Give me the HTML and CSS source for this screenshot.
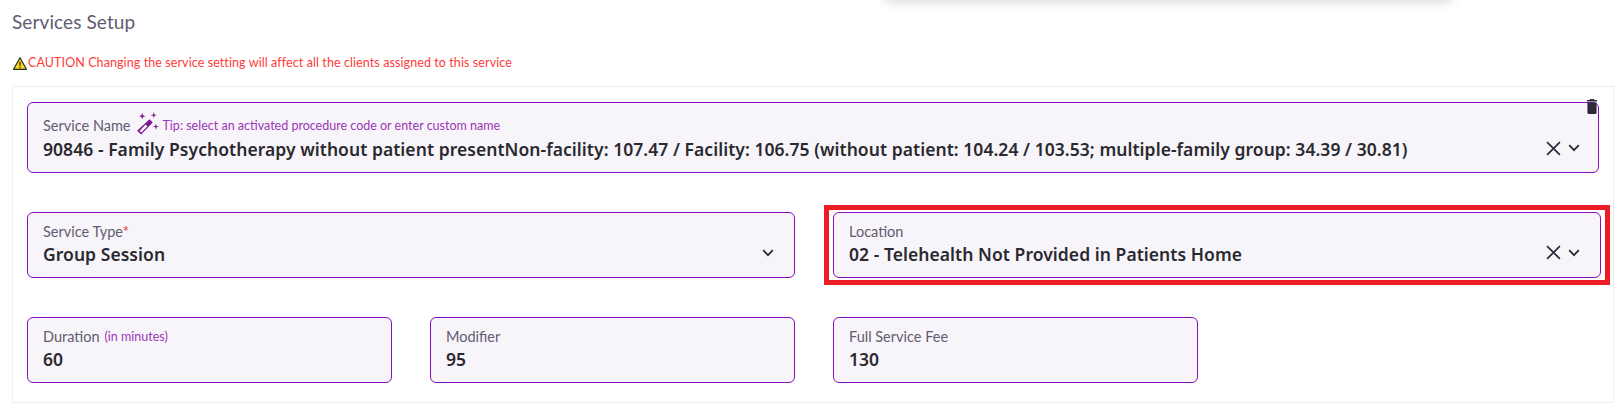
FILE: index.html
```html
<!DOCTYPE html>
<html lang="en">
<head>
    <meta charset="UTF-8">
    <meta name="viewport" content="width=device-width, initial-scale=1.0">
    <title>Services Setup</title>
    <link rel="stylesheet" href="styles.css">
</head>
<body>
    <!-- Menu sticking out of the top of the window -->
    <div class="top-popup"></div>

    <h1 class="page-title">Services Setup</h1>

    <p class="caution">
        <svg class="caution-icon" viewBox="0 0 24 22">
            <path d="M12 1 L23 21 H1 Z" fill="#f4d81c" stroke="#2d2a12" stroke-width="2" stroke-linejoin="round"/>
            <rect x="11" y="8" width="2.2" height="7" fill="#2d2a12"/>
            <rect x="11" y="16.5" width="2.2" height="2.2" fill="#2d2a12"/>
        </svg>
        <span>CAUTION Changing the service setting will affect all the clients assigned to this service</span>
    </p>

    <div class="panel">
        <svg class="delete-icon" viewBox="0 0 10 15">
            <path d="M3.2 0 H6.8 L7.4 1 H10 V2.6 H0 V1 H2.6 Z" fill="#2f2a3b"/>
            <path d="M0.4 3.4 H9.6 V13.4 Q9.6 15 8 15 H2 Q0.4 15 0.4 13.4 Z" fill="#2f2a3b"/>
        </svg>

        <!-- Service name -->
        <div class="field field-name">
            <div class="field-body">
                <div class="field-label">
                    <span>Service Name</span>
                    <svg class="wand-icon" viewBox="0 0 22 22">
                        <path d="M1 18 L13 7 L16 10 L5 21.5 Z M3.4 18.2 L5.2 19.6 L11 13.6 L9.2 12 Z" fill="#7b1a8c" fill-rule="evenodd"/>
                        <path d="M6 1 L6.8 3.2 L9 4 L6.8 4.8 L6 7 L5.2 4.8 L3 4 L5.2 3.2 Z" fill="#7b1a8c"/>
                        <path d="M17 0 L17.7 2.3 L20 3 L17.7 3.7 L17 6 L16.3 3.7 L14 3 L16.3 2.3 Z" fill="#7b1a8c"/>
                        <path d="M19 11 L19.7 13.3 L22 14 L19.7 14.7 L19 17 L18.3 14.7 L16 14 L18.3 13.3 Z" fill="#7b1a8c"/>
                    </svg>
                    <span class="tip">Tip: select an activated procedure code or enter custom name</span>
                </div>
                <div class="field-value">90846 - Family Psychotherapy without patient presentNon-facility: 107.47 / Facility: 106.75 (without patient: 104.24 / 103.53; multiple-family group: 34.39 / 30.81)</div>
            </div>
            <svg class="clear-icon" viewBox="0 0 14 14"><path d="M1 1 L13 13 M13 1 L1 13"/></svg>
            <svg class="chevron-icon" viewBox="0 0 10 7"><path d="M0.8 1 L5 5.4 L9.2 1"/></svg>
        </div>

        <div class="grid">
            <div class="field span-2">
                <div class="field-body">
                    <div class="field-label"><span>Service Type<span class="required">*</span></span></div>
                    <div class="field-value">Group Session</div>
                </div>
                <svg class="chevron-icon" viewBox="0 0 10 7"><path d="M0.8 1 L5 5.4 L9.2 1"/></svg>
            </div>

            <div class="field span-2 highlighted">
                <div class="field-body">
                    <div class="field-label"><span>Location</span></div>
                    <div class="field-value">02 - Telehealth Not Provided in Patients Home</div>
                </div>
                <svg class="clear-icon" viewBox="0 0 14 14"><path d="M1 1 L13 13 M13 1 L1 13"/></svg>
                <svg class="chevron-icon" viewBox="0 0 10 7"><path d="M0.8 1 L5 5.4 L9.2 1"/></svg>
            </div>

            <div class="field">
                <div class="field-body">
                    <div class="field-label"><span>Duration</span> <span class="tip">(in minutes)</span></div>
                    <div class="field-value">60</div>
                </div>
            </div>
            <div class="field">
                <div class="field-body">
                    <div class="field-label"><span>Modifier</span></div>
                    <div class="field-value">95</div>
                </div>
            </div>
            <div class="field">
                <div class="field-body">
                    <div class="field-label"><span>Full Service Fee</span></div>
                    <div class="field-value">130</div>
                </div>
            </div>
        </div>
    </div>
</body>
</html>
```

FILE: styles.css
```css
/* Basic reset */
* {
    margin: 0;
    padding: 0;
    box-sizing: border-box;
}

html, body {
    height: 100%;
    overflow: hidden;
}

body {
    position: relative;
    background-color: white;
    font-family: "Noto Sans", Arial, sans-serif;
    padding: 0 7px 0 12px;
}

.top-popup {
    position: absolute;
    top: -30px;
    left: 886px;
    width: 566px;
    height: 30px;
    background-color: white;
    box-shadow: 0 1px 12px rgba(0, 0, 0, 0.18);
}

.page-title {
    font-family: Lato, sans-serif;
    font-size: 19px;
    font-weight: 400;
    line-height: 24px;
    letter-spacing: 0.1px;
    color: #625b71;
    padding-top: 10px;
    height: 34px;
}

.caution {
    display: flex;
    align-items: center;
    font-family: Lato, sans-serif;
    font-size: 12.5px;
    line-height: 16px;
    letter-spacing: 0.09px;
    color: #ff3b3b;
    margin-top: 21px;
    margin-bottom: 15px;
}

.caution-icon {
    width: 14px;
    height: 13px;
    margin-left: 1px;
    margin-right: 1px;
}

/* Main panel */
.panel {
    position: relative;
    border: 1px solid #eeeeee;
    padding: 15px 12px 18px 14px;
    height: 317px;
}

.delete-icon {
    position: absolute;
    z-index: 1;
    top: 12px;
    right: 16px;
    width: 10px;
    height: 15px;
}

.grid {
    display: grid;
    grid-template-columns: repeat(4, 1fr);
    column-gap: 38px;
    row-gap: 39px;
    margin-top: 39px;
}

.span-2 {
    grid-column: span 2;
}

/* Form fields */
.field {
    position: relative;
    display: flex;
    align-items: center;
    height: 66px;
    padding: 0 20px 3px 15px;
    background-color: #f7f5fa;
    border: 1px solid #8510bd;
    border-radius: 6px;
}

.field-name {
    height: 71px;
    margin-right: 2px;
    padding-bottom: 1px;
    padding-right: 18px;
}

/* Red annotation box round the location field */
.highlighted::after {
    content: "";
    position: absolute;
    top: -8px;
    right: -10px;
    bottom: -8px;
    left: -10px;
    border: 5px solid #ed1c24;
}

.field-body {
    flex: 1;
    min-width: 0;
}

.field-label {
    display: flex;
    align-items: center;
    gap: 5px;
    margin-bottom: 1px;
    font-family: Lato, sans-serif;
    font-size: 14.5px;
    line-height: 20px;
    color: #625b71;
}

.field-name .field-label {
    height: 24px;
    margin-bottom: 0;
}

.field-value {
    font-size: 17.5px;
    font-weight: 600;
    line-height: 23px;
    letter-spacing: 0.05px;
    color: #2b2930;
    white-space: nowrap;
}

.tip {
    font-size: 12.5px;
    color: #9c36b5;
}

.required {
    color: #e53935;
}

.wand-icon {
    width: 23px;
    height: 23px;
    margin-top: -5px;
    margin-right: -1px;
}

.clear-icon {
    width: 15px;
    height: 15px;
    margin-right: 7px;
    margin-top: 18px;
}

.clear-icon path,
.chevron-icon path {
    fill: none;
    stroke: #2f2a3b;
    stroke-width: 1.6;
}

.chevron-icon {
    width: 12px;
    height: 8px;
    margin-top: 18px;
}

.field-name .clear-icon,
.field-name .chevron-icon {
    margin-top: 22px;
}
```
